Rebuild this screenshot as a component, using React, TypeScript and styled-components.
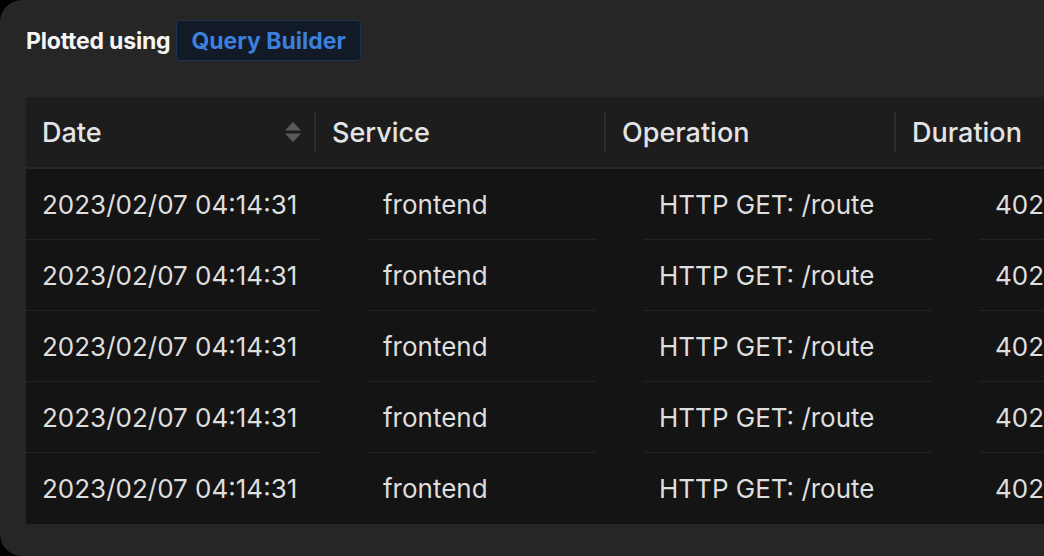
import styled, { createGlobalStyle } from "styled-components";

const GlobalStyle = createGlobalStyle`
  html, body {
    margin: 0;
    padding: 0;
    background: #000;
    font-family: Inter, "Noto Sans", sans-serif;
    overflow: hidden;
  }
`;

const Panel = styled.div`
  width: 1100px;
  height: 556px;
  background: #262626;
  border-radius: 22px 0 0 22px;
  padding: 20px 0 0 26px;
  box-sizing: border-box;
  overflow: hidden;
`;

const TitleRow = styled.div`
  display: flex;
  align-items: center;
  gap: 6px;
  height: 41px;
`;

const Title = styled.span`
  color: #f5f5f5;
  font-size: 23px;
  font-weight: 700;
  letter-spacing: -0.2px;
`;

const Badge = styled.span`
  display: inline-flex;
  align-items: center;
  height: 41px;
  box-sizing: border-box;
  padding: 0 14px;
  background: #121a27;
  border: 1px solid #1f3352;
  border-radius: 4px;
  color: #3c7fdc;
  font-size: 23px;
  font-weight: 700;
`;

const Table = styled.div`
  margin-top: 36px;
  width: 1160px;
`;

const HeaderRow = styled.div`
  display: grid;
  grid-template-columns: repeat(4, 290px);
  height: 70px;
  background: #1d1d1d;
  border-bottom: 2px solid #292929;
`;

const HeaderCell = styled.div<{ $divider?: boolean }>`
  position: relative;
  display: flex;
  align-items: center;
  justify-content: space-between;
  padding: 0 16px;
  color: #e4e4e4;
  font-size: 27px;
  font-weight: 500;
  &::after {
    content: "";
    display: ${(p) => (p.$divider ? "block" : "none")};
    position: absolute;
    right: 0;
    top: 15px;
    bottom: 15px;
    width: 2px;
    background: #2c2c2c;
  }
`;

const SortIcon = styled.svg`
  width: 18px;
  height: 24px;
  margin-right: -2px;
`;

const BodyRow = styled.div`
  display: grid;
  grid-template-columns: 294px 229px 289px 1fr;
  column-gap: 47px;
  background: #141414;
  height: 71px;
`;

const BodyCell = styled.div<{ $last?: boolean }>`
  display: flex;
  align-items: center;
  padding: 0 16px;
  color: #dedede;
  font-size: 26px;
  font-weight: 400;
  border-bottom: 1px solid ${(p) => (p.$last ? "transparent" : "#232323")};
  white-space: nowrap;
`;

const headers = ["Date", "Service", "Operation", "Duration"];
const rows = Array.from({ length: 5 }, () => ({
  date: "2023/02/07 04:14:31",
  service: "frontend",
  operation: "HTTP GET: /route",
  duration: "402",
}));

export default function App() {
  return (
    <>
      <GlobalStyle />
      <Panel>
        <TitleRow>
          <Title>Plotted using</Title>
          <Badge>Query Builder</Badge>
        </TitleRow>
        <Table>
          <HeaderRow>
            {headers.map((h, i) => (
              <HeaderCell key={h} $divider={i < headers.length - 1}>
                {h}
                {i === 0 && (
                  <SortIcon viewBox="0 0 18 24">
                    <path d="M9 2 L17 10.5 H1 Z" fill="#595959" />
                    <path d="M1 13.5 H17 L9 22 Z" fill="#595959" />
                  </SortIcon>
                )}
              </HeaderCell>
            ))}
          </HeaderRow>
          {rows.map((r, i) => {
            const last = i === rows.length - 1;
            return (
              <BodyRow key={i}>
                <BodyCell $last={last}>{r.date}</BodyCell>
                <BodyCell $last={last}>{r.service}</BodyCell>
                <BodyCell $last={last}>{r.operation}</BodyCell>
                <BodyCell $last={last}>{r.duration}</BodyCell>
              </BodyRow>
            );
          })}
        </Table>
      </Panel>
    </>
  );
}
